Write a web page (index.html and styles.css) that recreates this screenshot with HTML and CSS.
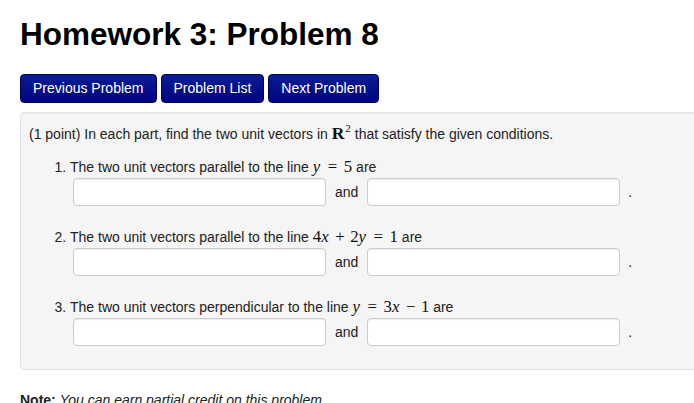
FILE: index.html
```html
<!DOCTYPE html>
<html lang="en">
<head>
    <meta charset="UTF-8">
    <meta name="viewport" content="width=device-width, initial-scale=1.0">
    <title>Homework 3: Problem 8</title>
    <link rel="stylesheet" href="styles.css">
</head>
<body>

    <div class="page">
        <h2 class="title">Homework 3: Problem 8</h2>

        <!-- Problem navigation -->
        <div class="nav">
            <a class="btn" href="#">Previous Problem</a>
            <a class="btn" href="#">Problem List</a>
            <a class="btn" href="#">Next Problem</a>
        </div>

        <div class="well problem">
            <p class="intro">(1 point) In each part, find the two unit vectors in <span class="math"><b class="bb">R</b><sup>2</sup></span> that satisfy the given conditions.</p>

            <ol class="parts">
                <li>
                    <div class="q">The two unit vectors parallel to the line <span class="math"><i>y</i><span class="rel">=</span>5</span> are</div>
                    <div class="answers">
                        <input class="answer" type="text">
                        <span class="and">and</span>
                        <input class="answer" type="text">
                        <span class="dot">.</span>
                    </div>
                </li>
                <li>
                    <div class="q">The two unit vectors parallel to the line <span class="math">4<i>x</i><span class="bin">+</span>2<i>y</i><span class="rel">=</span>1</span> are</div>
                    <div class="answers">
                        <input class="answer" type="text">
                        <span class="and">and</span>
                        <input class="answer" type="text">
                        <span class="dot">.</span>
                    </div>
                </li>
                <li>
                    <div class="q">The two unit vectors perpendicular to the line <span class="math"><i>y</i><span class="rel">=</span>3<i>x</i><span class="bin">&minus;</span>1</span> are</div>
                    <div class="answers">
                        <input class="answer" type="text">
                        <span class="and">and</span>
                        <input class="answer" type="text">
                        <span class="dot">.</span>
                    </div>
                </li>
            </ol>
        </div>

        <p class="note"><b>Note:</b> <em>You can earn partial credit on this problem.</em></p>
    </div>

</body>
</html>
```

FILE: styles.css
```css
/* Basic styles */
body {
    margin: 0;
    overflow: hidden; /* Panel runs past the right edge */
    background-color: #fff;
    color: #222;
    font-family: 'Liberation Sans', Arial, sans-serif;
    font-size: 14px;
    line-height: 20px;
}

.page {
    padding: 14px 20px 0;
    width: 760px; /* Wider than the window, like the real page */
}

/* Heading */
.title {
    margin: 0 0 20px;
    font-size: 31.5px;
    line-height: 40px;
    font-weight: bold;
    color: #000;
}

/* Navigation buttons */
.nav {
    display: flex;
    gap: 4px;
    margin-bottom: 9px;
}

.btn {
    display: block;
    padding: 4px 12px;
    line-height: 19px;
    color: #fff;
    text-decoration: none;
    background: linear-gradient(#0a1d92, #01037f);
    border: 1px solid #00045e;
    border-radius: 4px;
}

/* Problem panel */
.well {
    background-color: #f5f5f5;
    border: 1px solid #e3e3e3;
    border-radius: 4px;
    box-shadow: inset 0 1px 1px rgba(0,0,0,0.05);
}

.problem {
    padding: 11px 8px 23px;
}

.intro {
    margin: 0 0 13px;
}

.parts {
    margin: 0;
    padding-left: 41px;
}

.parts li {
    margin-bottom: 21px;
}
.parts li:last-child {
    margin-bottom: 0;
}

.answers {
    display: flex;
    align-items: center;
    margin-top: 1px;
}

.answer {
    box-sizing: border-box;
    width: 253px;
    height: 28px;
    margin: 0;
    padding: 4px 6px;
    background: #fff;
    border: 1px solid #ccc;
    border-radius: 4px;
    box-shadow: inset 0 1px 1px rgba(0,0,0,0.075);
    font: inherit;
}
.answer:first-child {
    margin-left: 3px;
}

.and {
    margin: 0 9px;
}

.dot {
    margin-left: 8px;
}

/* Math (stand-in for MathJax) */
.math {
    font-family: 'Liberation Serif', 'Times New Roman', serif;
    font-size: 16.8px;
    line-height: 1;
    color: #111;
}
.math i {
    padding-right: 1px;
}
.math .rel {
    margin: 0 0.39em;
}
.math .bin {
    margin: 0 0.33em;
}
.math .bb {
    font-size: 17.5px;
}
.math sup {
    font-size: 11px;
    line-height: 0;
    vertical-align: 7px;
    margin-left: 1px;
}

.note {
    margin: 20px 0 0;
}
```
